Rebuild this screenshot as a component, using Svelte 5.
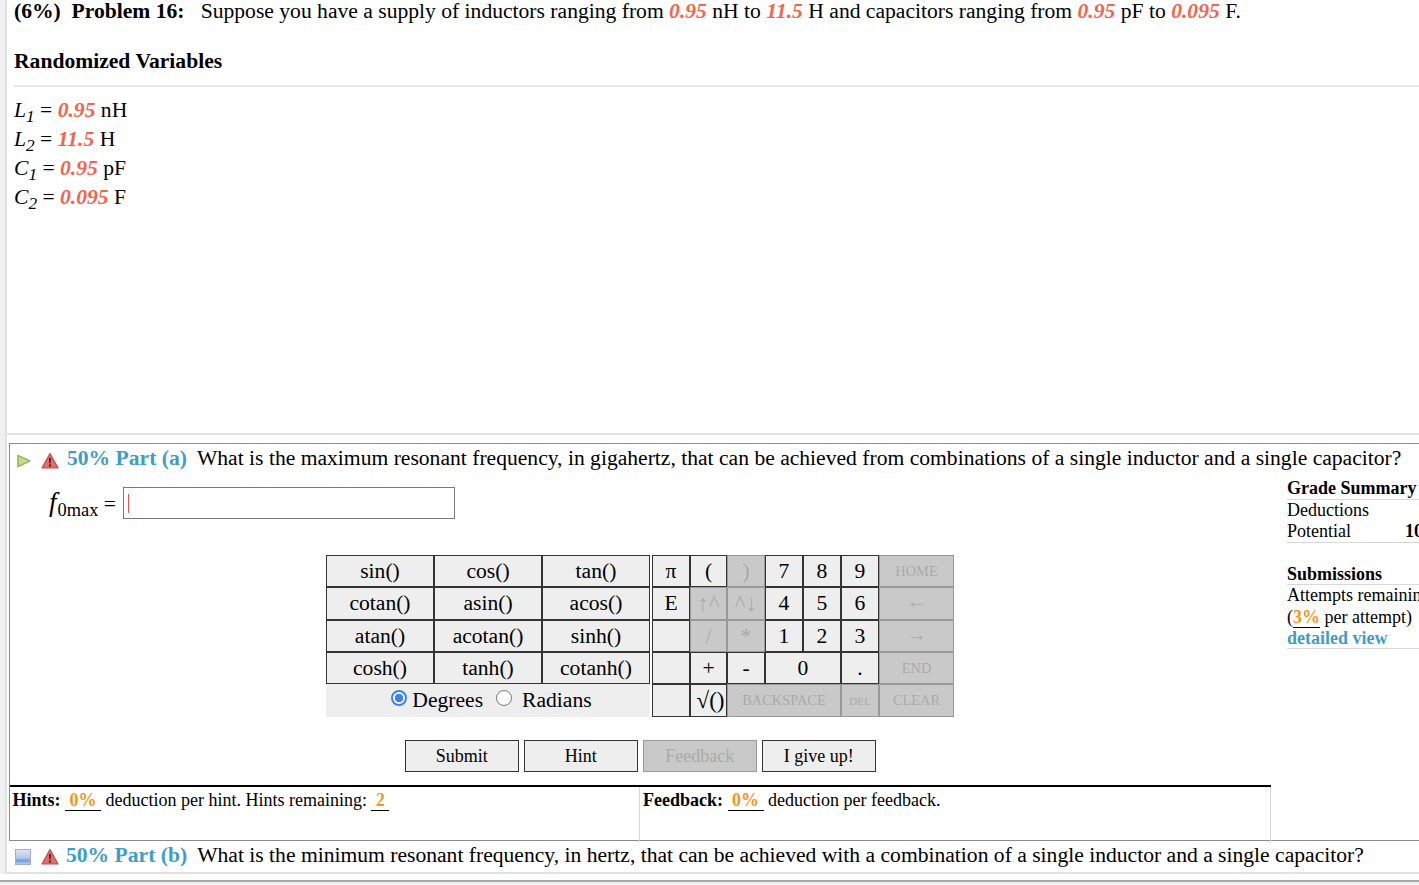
<script>
	const fnKeys = ['sin()', 'cos()', 'tan()', 'cotan()', 'asin()', 'acos()', 'atan()', 'acotan()', 'sinh()', 'cosh()', 'tanh()', 'cotanh()'];
	const padKeys = [
		{ t: 'π' }, { t: '(' }, { t: ')', off: true }, { t: '7' }, { t: '8' }, { t: '9' }, { t: 'HOME', off: true, small: true },
		{ t: 'E' }, { t: '↑^', off: true, tall: true }, { t: '^↓', off: true, tall: true }, { t: '4' }, { t: '5' }, { t: '6' }, { t: '←', off: true, side: true },
		{ t: '' }, { t: '/', off: true }, { t: '*', off: true }, { t: '1' }, { t: '2' }, { t: '3' }, { t: '→', off: true, side: true },
		{ t: '' }, { t: '+' }, { t: '-' }, { t: '0', wide: true }, { t: '.' }, { t: 'END', off: true, small: true },
		{ t: '' }, { t: '√()', root: true }, { t: 'BACKSPACE', off: true, small: true, span3: true }, { t: 'DEL', off: true, tiny: true }, { t: 'CLEAR', off: true, small: true }
	];
	const vars = [
		{ n: 'L', s: '1', v: '0.95', u: 'nH' },
		{ n: 'L', s: '2', v: '11.5', u: 'H' },
		{ n: 'C', s: '1', v: '0.95', u: 'pF' },
		{ n: 'C', s: '2', v: '0.095', u: 'F' }
	];
</script>

{#snippet warn()}
	<svg class="warn" width="18" height="18" viewBox="0 0 18 18">
		<path d="M9 1.5 L17 16 H1 Z" fill="#e06c6c" stroke="#c24a4a" stroke-width="1.2" stroke-linejoin="round" />
		<path d="M8 6 h2 l-.4 5.5 h-1.2 Z M8 12.5 h2 v2 h-2 Z" fill="#5a1212" />
	</svg>
{/snippet}

<div class="page">
	<div class="problem">
		<p class="intro"><b>(6%)&nbsp; Problem 16:</b>&nbsp;&nbsp; Suppose you have a supply of inductors ranging from <em>0.95</em> nH to <em>11.5</em> H and capacitors ranging from <em>0.95</em> pF to <em>0.095</em> F.</p>
		<h2>Randomized Variables</h2>
		<div class="vars">
			{#each vars as x}
				<div class="var"><i>{x.n}<sub>{x.s}</sub></i> = <em>{x.v}</em> {x.u}</div>
			{/each}
		</div>
	</div>

	<div class="part">
		<div class="part-head">
			<svg class="arrow" width="16" height="16" viewBox="0 0 16 16">
				<path d="M2 2.5 L14 8 L2 13.5 Z" fill="#c3dc8e" stroke="#9cb96a" stroke-width="1.8" stroke-linejoin="round" />
			</svg>
			{@render warn()}
			<b class="pct">50% Part (a)</b>
			<span>What is the maximum resonant frequency, in gigahertz, that can be achieved from combinations of a single inductor and a single capacitor?</span>
		</div>

		<div class="part-body">
			<div class="main">
				<div class="answer">
					<span class="label"><i>f</i><sub>0max</sub> =</span>
					<div class="input"><span class="caret"></span></div>
				</div>

				<div class="calc">
					<div class="fns">
						{#each fnKeys as k}
							<div class="key">{k}</div>
						{/each}
						<div class="units">
							<span class="radio on"></span><span class="deg">Degrees</span>
							<span class="radio"></span><span class="rad">Radians</span>
						</div>
					</div>
					<div class="pad">
						{#each padKeys as k}
							<div class="key" class:off={k.off} class:small={k.small} class:tiny={k.tiny} class:wide={k.wide} class:span3={k.span3} class:tall={k.tall} class:side={k.side} class:root={k.root}>{k.t}</div>
						{/each}
					</div>
				</div>

				<div class="actions">
					<div class="btn">Submit</div>
					<div class="btn">Hint</div>
					<div class="btn off">Feedback</div>
					<div class="btn">I give up!</div>
				</div>

				<div class="notes">
					<div class="note hints"><b>Hints:</b> <span class="u">0%</span> deduction per hint. Hints remaining: <span class="u">2</span></div>
					<div class="note fb"><b>Feedback:</b> <span class="u">0%</span> deduction per feedback.</div>
				</div>
			</div>

			<aside>
				<div class="row line"><b>Grade Summary</b></div>
				<div class="row">Deductions</div>
				<div class="row line between"><span>Potential</span><b class="clip">100%</b></div>
				<div class="row line second"><b>Submissions</b></div>
				<div class="row nowrap">Attempts remaining: 3</div>
				<div class="row">(<span class="u3">3%</span> per attempt)</div>
				<div class="row line link"><b>detailed view</b></div>
			</aside>
		</div>
	</div>

	<div class="part-b">
		<svg class="box" width="16" height="16" viewBox="0 0 16 16">
			<defs>
				<linearGradient id="fill" x1="0" y1="0" x2="0" y2="1">
					<stop offset="0" stop-color="#dfe6f4" />
					<stop offset="0.55" stop-color="#b5c8ea" />
					<stop offset="0.75" stop-color="#6f9be0" />
					<stop offset="1" stop-color="#c5d4ef" />
				</linearGradient>
			</defs>
			<rect x="0.5" y="0.5" width="15" height="15" fill="url(#fill)" stroke="#9fb0cc" />
		</svg>
		{@render warn()}
		<b class="pct">50% Part (b)</b>
		<span>What is the minimum resonant frequency, in hertz, that can be achieved with a combination of a single inductor and a single capacitor?</span>
	</div>
	<div class="page-end"></div>
</div>

<style>
	:global(body) {
		margin: 0;
		background: #fff;
		font-family: 'Liberation Serif', 'Times New Roman', serif;
		color: #000;
	}

	.page {
		width: 1419px;
		height: 885px;
		overflow: hidden;
		box-sizing: border-box;
		background: #f0f0f0;
	}

	.problem,
	.part,
	.part-b {
		margin-left: 5px;
		background: #fff;
		border-left: 2px solid #e2e2e2;
	}

	.problem {
		height: 435px;
		box-sizing: border-box;
		padding: 0 0 0 7px;
		border-bottom: 2px solid #e2e2e2;
	}

	.intro {
		margin: 0;
		height: 44px;
		font-size: 21.6px;
		line-height: 22px;
		white-space: nowrap;
	}

	em {
		font-weight: bold;
		color: #f9614c;
	}

	h2 {
		margin: 0;
		height: 43px;
		line-height: 34px;
		font-size: 21.6px;
		border-bottom: 2px solid #e6e6e6;
		box-sizing: border-box;
	}

	.vars {
		padding-top: 8.6px;
		font-size: 21.6px;
		line-height: 29.3px;
	}

	.var {
		height: 29.3px;
		white-space: nowrap;
	}

	sub {
		font-size: 0.8em;
		line-height: 0;
	}

	.part {
		padding: 8px 0 0 2px;
	}

	.part-head {
		display: flex;
		align-items: center;
		height: 28px;
		border: 1px solid #8c8c8c;
		border-right: 0;
		border-bottom: 0;
		padding-left: 6px;
		padding-bottom: 3px;
		box-sizing: content-box;
		font-size: 21.6px;
		white-space: nowrap;
	}

	.arrow {
		flex: none;
		margin-right: 9px;
		margin-top: 5px;
	}

	.warn {
		flex: none;
		margin-right: 8px;
		margin-top: 5px;
	}

	.pct {
		color: #3e9dc6;
		margin-right: 10px;
	}

	.part-body {
		display: flex;
		height: 365px;
		border-left: 1px solid #8c8c8c;
		border-bottom: 1px solid #8c8c8c;
	}

	.main {
		width: 1261px;
		flex: none;
	}

	.answer {
		display: flex;
		align-items: flex-start;
		height: 80px;
		padding: 12px 0 0 39px;
		box-sizing: border-box;
	}

	.label {
		width: 74px;
		font-size: 21.6px;
		white-space: nowrap;
	}

	.label i {
		font-size: 27px;
		margin-right: 1px;
	}

	.label sub {
		font-size: 18.4px;
	}

	.input {
		width: 326px;
		height: 30px;
		border: 1px solid #7a7a7a;
		display: flex;
		align-items: center;
		padding-left: 4px;
		box-sizing: content-box;
	}

	.caret {
		width: 1px;
		height: 19px;
		background: #f0504a;
	}

	.calc {
		display: flex;
		margin-left: 316px;
		gap: 2px;
		height: 162px;
	}

	.fns {
		display: grid;
		grid-template-columns: repeat(3, 108px);
		grid-template-rows: 32px 33px 32px 32px 33px;
		width: 324px;
	}

	.pad {
		display: grid;
		grid-template-columns: 38px 37px 38px 38px 38px 38px 75px;
		grid-template-rows: 32px 33px 32px 32px 33px;
	}

	.key {
		display: flex;
		align-items: center;
		justify-content: center;
		background: #eeeeee;
		border: 1px solid #333;
		font-size: 21.6px;
		box-sizing: border-box;
		white-space: nowrap;
	}

	.key.off {
		background: #c9c9c9;
		border-color: #999;
		color: #aaa;
	}

	.key.small {
		font-size: 14.4px;
	}

	.key.tiny {
		font-size: 11px;
	}

	.key.tall {
		font-size: 23px;
	}

	.key.side {
		font-size: 20px;
		padding-bottom: 4px;
	}

	.key.root {
		font-size: 23px;
		padding-left: 4px;
	}

	.key.wide {
		grid-column: span 2;
	}

	.key.span3 {
		grid-column: span 3;
	}

	.units {
		grid-column: span 3;
		background: #eeeeee;
		display: flex;
		align-items: center;
		justify-content: center;
		padding-left: 7px;
		font-size: 21.6px;
	}

	.radio {
		flex: none;
		width: 16px;
		height: 16px;
		box-sizing: border-box;
		border-radius: 50%;
		border: 1px solid #777;
		background: #fff;
		margin-bottom: 6px;
	}

	.radio.on {
		border: 2px solid #3b82f6;
		background: radial-gradient(circle, #3b82f6 0 4px, #fff 4.5px);
	}

	.deg {
		margin: 0 13px 0 5px;
	}

	.rad {
		margin-left: 10px;
	}

	.actions {
		display: flex;
		gap: 5.5px;
		margin: 23px 0 0 395px;
	}

	.btn {
		width: 113.5px;
		height: 32px;
		box-sizing: border-box;
		display: flex;
		align-items: center;
		justify-content: center;
		background: #eeeeee;
		border: 1px solid #333;
		font-size: 18px;
	}

	.btn.off {
		background: #c9c9c9;
		border-color: #999;
		color: #aaa;
	}

	.notes {
		display: flex;
		margin-top: 13px;
		height: 55px;
		border-top: 2px solid #000;
		font-size: 18px;
	}

	.note {
		white-space: nowrap;
		padding: 3px 0 0 3px;
		box-sizing: border-box;
	}

	.hints {
		width: 630px;
		padding-left: 2.5px;
		border-right: 1px solid #d8d8d8;
	}

	.fb {
		flex: 1;
		border-right: 1px solid #d8d8d8;
	}

	.u {
		display: inline-block;
		color: #f7941d;
		font-weight: bold;
		padding: 0 4.5px;
		text-align: center;
		line-height: 19px;
		border-bottom: 1px solid #000;
	}

	aside {
		margin-left: 16px;
		padding-top: 3px;
		flex: 1;
		font-size: 18px;
		min-width: 0;
		overflow: hidden;
	}

	.row {
		height: 21.6px;
		line-height: 21px;
		box-sizing: border-box;
		white-space: nowrap;
	}

	.second {
		margin-top: 21px;
	}

	.line {
		border-bottom: 1px solid #d8d8d8;
	}

	.between {
		display: flex;
		justify-content: space-between;
		width: 160px;
	}

	.clip {
		margin-left: 54px;
	}

	.u3 {
		color: #f7941d;
		font-weight: bold;
		border-bottom: 1px solid #000;
	}

	.link {
		color: #3e9dc6;
		line-height: 18px;
		height: 20.6px;
	}

	.part-b {
		display: flex;
		align-items: center;
		height: 33px;
		padding-left: 8px;
		padding-bottom: 2px;
		font-size: 21.6px;
		white-space: nowrap;
		border-bottom: 2px solid #e2e2e2;
		box-sizing: border-box;
	}

	.box {
		flex: none;
		margin-right: 10px;
		margin-top: 3px;
	}

	.part-b .warn {
		margin-top: 3px;
		margin-right: 7px;
	}

	.page-end {
		height: 6px;
		background: #fff;
		border-bottom: 2px solid #a8a8a8;
	}
</style>
